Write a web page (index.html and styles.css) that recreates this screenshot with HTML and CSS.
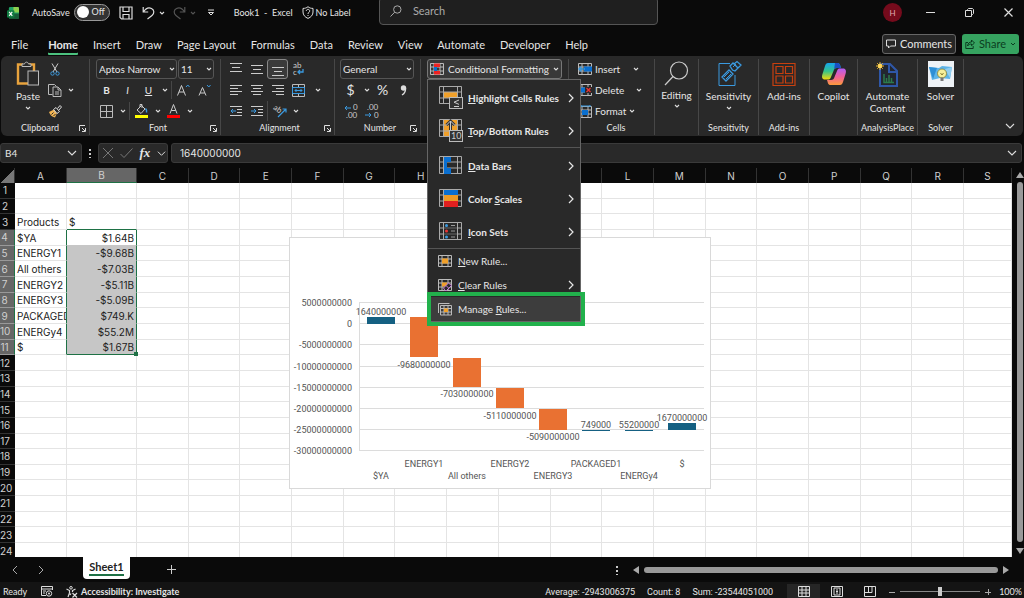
FILE: index.html
```html
<!DOCTYPE html>
<html lang="en">
<head>
  <meta charset="UTF-8">
  <title>Book1 - Excel</title>
  <link rel="stylesheet" href="styles.css">
</head>
<body>

  <!-- Shared icons -->
  <svg class="defs" aria-hidden="true">
    <symbol id="chev" viewBox="0 0 6 6"><path d="M1 2l2 2 2-2" fill="none" stroke="#ddd" stroke-width="1.1"/></symbol>
    <symbol id="chev-big" viewBox="0 0 10 10"><path d="M1 3l4 4 4-4" fill="none" stroke="#ddd" stroke-width="1.1"/></symbol>
    <symbol id="arrow-right" viewBox="0 0 6 10"><path d="M1 1l4 4-4 4" fill="none" stroke="#e6e6e6" stroke-width="1.2"/></symbol>
    <symbol id="launch" viewBox="0 0 7 7"><path d="M.5 6V.5H6M3 3l3 3M6.500 3v3.500H3" fill="none" stroke="#ddd"/></symbol>
    <symbol id="grid-sm" viewBox="0 0 14 12"><path d="M.5.5h13v11H.5zM4 .5v11M10 .5v11M.5 4h13M.5 8h13" fill="none" stroke="#bbb"/></symbol>
    <symbol id="grid-lg" viewBox="0 0 24 19"><path d="M.5.5h22v17H.5zM4.500.5v17M18.500.5v17M.5 6h22M.5 12h22" fill="none" stroke="#aaa"/></symbol>
  </svg>

  <header class="titlebar">
    <svg class="logo" viewBox="0 0 13 13"><rect x="2" width="11" height="13" rx="1.500" fill="#21a366"/><path d="M7 0h4.500A1.500 1.500 0 0 1 13 1.500V6H7z" fill="#8fd04e"/><path d="M2 7h11v4.500a1.500 1.500 0 0 1-1.500 1.500h-8A1.500 1.500 0 0 1 2 11.500z" fill="#185c37"/><rect y="3.500" width="8" height="8" rx="1" fill="#107c41"/><path d="M2.300 5.300l3.400 4.400M5.700 5.300L2.300 9.700" stroke="#fff" stroke-width="1.200"/></svg>
    <label class="autosave">AutoSave
      <span class="toggle"><input type="checkbox"><span class="toggle-text">Off</span></span>
    </label>
    <button class="tb-btn save" aria-label="Save"><svg width="14" height="14" viewBox="0 0 14 14"><path d="M1 1h12v12H2.500L1 11.500zM4 1v4.500h6V1M4 13V8.500h6V13" fill="none" stroke="#ddd" stroke-width="1.200"/></svg></button>
    <button class="tb-btn undo" aria-label="Undo"><svg width="13" height="14" viewBox="0 0 13 14"><path d="M1.200 1v5h5M1.500 5.800C4 2 7 1.200 9.500 2.500c3 1.500 3 5 .5 7L5.500 13" fill="none" stroke="#ddd" stroke-width="1.200"/></svg><svg class="chev"><use href="#chev"/></svg></button>
    <button class="tb-btn redo" aria-label="Redo"><svg width="13" height="14" viewBox="0 0 13 14"><path d="M11.800 1v5h-5M11.500 5.800C9 2 6 1.200 3.500 2.500c-3 1.500-3 5-.5 7L7.500 13" fill="none" stroke="#ddd" stroke-width="1.200"/></svg><svg class="chev"><use href="#chev"/></svg></button>
    <button class="tb-btn more" aria-label="Customize toolbar"><svg width="6" height="7" viewBox="0 0 6 7"><path d="M0 1h6M.5 3.500L3 6l2.500-2.500z" fill="none" stroke="#ddd"/></svg></button>
    <span class="doc-name">Book1&nbsp; -&nbsp; Excel</span>
    <button class="tb-btn label-btn"><svg width="12" height="13" viewBox="0 0 12 13"><path d="M6 .7C4.500 2 3 2.400 1 2.400V6c0 3 2 5.200 5 6.400 3-1.200 5-3.400 5-6.400V2.400C9 2.400 7.500 2 6 .7zM4.300 5c0-2.200 3.400-2.200 3.400 0C7.700 6.300 6 6.300 6 8M6 9v1" fill="none" stroke="#ddd"/></svg>No Label</button>
    <label class="search">
      <svg width="12" height="12" viewBox="0 0 12 12"><circle cx="7.300" cy="4.500" r="3.700" fill="none" stroke="#aaa"/><path d="M4.700 7.200L.5 11.500" stroke="#aaa"/></svg>
      <input type="text" placeholder="Search" aria-label="Search">
    </label>
    <div class="window-btns">
      <button class="avatar">H</button>
      <button aria-label="Minimize"><svg width="9" height="9"><path d="M0 4.500h9" stroke="#ddd"/></svg></button>
      <button aria-label="Restore"><svg width="9" height="9" viewBox="0 0 9 9"><path d="M.5 2.500h6v6h-6zM2.500 2.500v-1l1-1h4l1 1v4l-1 1h-1" fill="none" stroke="#ddd"/></svg></button>
      <button aria-label="Close"><svg width="9" height="9"><path d="M.5.5l8 8M8.500.5l-8 8" stroke="#ddd" stroke-width="1.200"/></svg></button>
    </div>
  </header>

  <nav class="tabs">
    <a href="#" class="file">File</a>
    <a href="#" class="active">Home</a>
    <a href="#">Insert</a>
    <a href="#">Draw</a>
    <a href="#">Page Layout</a>
    <a href="#">Formulas</a>
    <a href="#">Data</a>
    <a href="#">Review</a>
    <a href="#">View</a>
    <a href="#">Automate</a>
    <a href="#">Developer</a>
    <a href="#">Help</a>
    <div class="tab-actions">
      <button class="comments"><svg width="10" height="10" viewBox="0 0 10 10"><path d="M.5 1h9v6H4.500L2.500 9V7h-2z" fill="none" stroke="#ddd"/></svg>Comments</button>
      <button class="share"><svg width="10" height="10" viewBox="0 0 10 10"><path d="M3 3.500H.8v6h7.400V7M2.500 7c.5-3 2-4 4-4V1l3 3-3 2.700V5C5 5 3.500 5.500 2.500 7z" fill="none" stroke="#0b3d20"/></svg>Share<svg class="chev dark" viewBox="0 0 6 6"><path d="M1 2l2 2 2-2" fill="none" stroke="#0b3d20"/></svg></button>
    </div>
  </nav>

  <section class="ribbon">
    <div class="group clipboard">
      <div class="group-body">
        <button class="big paste"><svg width="24" height="26" viewBox="0 0 24 26"><path d="M7 3.500H2v19h10" fill="none" stroke="#e8a33d" stroke-width="2.400"/><path d="M13 3.500h5V10" fill="none" stroke="#e8a33d" stroke-width="2.400"/><path d="M6 5.500V3h2.500C9 .5 12 .5 12.500 3H15v2.500z" fill="#292929" stroke="#bbb"/><rect x="12" y="10" width="10.500" height="14" fill="#292929" stroke="#bbb"/></svg>Paste<svg class="chev"><use href="#chev"/></svg></button>
        <div class="rows">
          <div class="row"><button aria-label="Cut"><svg width="10" height="13" viewBox="0 0 10 13"><path d="M2 .5L7 9M8 .5L3 9" stroke="#ccc" fill="none"/><circle cx="2.500" cy="10.500" r="1.700" fill="none" stroke="#3a9ae0"/><circle cx="7.500" cy="10.500" r="1.700" fill="none" stroke="#3a9ae0"/></svg></button></div>
          <div class="row"><button aria-label="Copy"><svg width="14" height="13" viewBox="0 0 14 13"><path d="M4.500 10.500h-4V.5h6l2 2M5 3h5l3 3v6.500H5zM10 3v3h3M7 8h4M7 10h4" fill="none" stroke="#bbb"/></svg></button><button class="drop" aria-label="Copy options"><svg class="chev"><use href="#chev"/></svg></button></div>
          <div class="row"><button aria-label="Format Painter"><svg width="14" height="13" viewBox="0 0 14 13"><path d="M1 7l5-2.500L9 8l-2 4.500C4 12 2 10 1 7z" fill="#f2b554"/><path d="M5.500 4.500L8 2.500l3.500 4L9 8.500zM9.500 3.500l2.500-3 1.500 1.500-2.500 3" fill="#292929" stroke="#ddd"/><path d="M3.500 9.500l2-2M5.500 11l2-2" stroke="#292929"/></svg></button></div>
        </div>
      </div>
      <div class="caption">Clipboard<button class="launcher" aria-label="Clipboard settings"><svg width="7" height="7"><use href="#launch"/></svg></button></div>
    </div>

    <div class="group font">
      <div class="group-body rows">
        <div class="row fields">
          <span class="field name"><select aria-label="Font"><option>Aptos Narrow</option></select><svg class="chev"><use href="#chev"/></svg></span>
          <span class="field size"><select aria-label="Font size"><option>11</option></select><svg class="chev"><use href="#chev"/></svg></span>
        </div>
        <div class="row">
          <button><b>B</b></button><button><i>I</i></button><button><u>U</u></button><button class="drop" aria-label="Underline options"><svg class="chev"><use href="#chev"/></svg></button><span class="bar"></span>
          <button aria-label="Increase font size"><svg width="13" height="12" viewBox="0 0 13 12"><path d="M.5 11.500L4.500 1.500l4 10M2 8h5" fill="none" stroke="#ccc"/><path d="M9 3l1.800-2 1.700 2" fill="none" stroke="#3a9ae0"/></svg></button><button aria-label="Decrease font size"><svg width="13" height="12" viewBox="0 0 13 12"><path d="M1 11.500L4.500 3.500l3.500 8M2.200 9h4.600" fill="none" stroke="#ccc"/><path d="M9 1l1.800 2 1.700-2" fill="none" stroke="#3a9ae0"/></svg></button>
        </div>
        <div class="row">
          <button aria-label="Borders"><svg width="13" height="13" viewBox="0 0 13 13"><path d="M.5.5h12v12H.5zM6.500.5v12M.5 6.500h12" fill="none" stroke="#bbb"/></svg></button><button class="drop" aria-label="Border options"><svg class="chev"><use href="#chev"/></svg></button><span class="bar"></span>
          <button aria-label="Fill color"><svg width="13" height="14" viewBox="0 0 13 14"><path d="M2 6l4.500-4.500L10 5 6 9.500zM5 3V.5h2V4" fill="none" stroke="#ccc"/><path d="M10.500 4.500c1.500 1.500 1.500 2.500 1 4" fill="none" stroke="#3a9ae0" stroke-width="1.500"/><path d="M0 11h13v3H0z" fill="#ff0"/></svg></button><button class="drop" aria-label="Fill options"><svg class="chev"><use href="#chev"/></svg></button>
          <button aria-label="Font color"><svg width="13" height="14" viewBox="0 0 13 14"><path d="M3 9.500L6.500.5l3.500 9M4.300 6.500h4.400" fill="none" stroke="#ccc"/><path d="M0 11h13v3H0z" fill="#f00"/></svg></button><button class="drop" aria-label="Font color options"><svg class="chev"><use href="#chev"/></svg></button>
        </div>
      </div>
      <div class="caption">Font<button class="launcher" aria-label="Font settings"><svg width="7" height="7"><use href="#launch"/></svg></button></div>
    </div>

    <div class="group align">
      <div class="group-body rows">
        <div class="row">
          <button aria-label="Top align"><svg width="12" height="12"><path d="M0 .5h12M2 4.500h8M0 8.500h12" stroke="#ccc"/></svg></button><button aria-label="Middle align"><svg width="12" height="12"><path d="M0 2.500h12M2 6.500h8M0 10.500h12" stroke="#ccc"/></svg></button><button class="pressed" aria-label="Bottom align"><svg width="12" height="12"><path d="M0 4.500h12M2 8.500h8M0 12.500h12" stroke="#ccc"/></svg></button><button aria-label="Wrap text"><svg width="13" height="14" viewBox="0 0 13 14"><text x="1" y="6" font-size="8" fill="#ccc">ab</text><text x="1" y="13" font-size="8" fill="#ccc">c</text><path d="M11 7v3H6M8 8l-2 2 2 2" fill="none" stroke="#3a9ae0" stroke-width="1.300"/></svg></button>
        </div>
        <div class="row">
          <button aria-label="Align left"><svg width="12" height="12"><path d="M0 1.500h12M0 4.500h8M0 7.500h12M0 10.500h8" stroke="#ccc"/></svg></button><button aria-label="Center"><svg width="12" height="12"><path d="M0 1.500h12M2 4.500h8M0 7.500h12M2 10.500h8" stroke="#ccc"/></svg></button><button aria-label="Align right"><svg width="12" height="12"><path d="M0 1.500h12M4 4.500h8M0 7.500h12M4 10.500h8" stroke="#ccc"/></svg></button><button aria-label="Merge"><svg width="13" height="13" viewBox="0 0 13 13"><path d="M.5.5h12v12H.5zM6.500.5v3M6.500 9.500v3" fill="none" stroke="#bbb"/><path d="M.5 3.500h12v6H.5zM3 6.500h7M4.500 5L3 6.500 4.500 8M8.500 5L10 6.500 8.500 8" fill="none" stroke="#3a9ae0"/></svg></button><button class="drop wide-drop" aria-label="Merge options"><svg class="chev"><use href="#chev"/></svg></button>
        </div>
        <div class="row">
          <button aria-label="Decrease indent"><svg width="12" height="12"><path d="M0 1.500h12M7 4.500h5M7 7.500h5M0 10.500h12" stroke="#ccc"/><path d="M6 6H1M3 4L1 6l2 2" fill="none" stroke="#3a9ae0"/></svg></button><button aria-label="Increase indent"><svg width="12" height="12"><path d="M0 1.500h12M7 4.500h5M7 7.500h5M0 10.500h12" stroke="#ccc"/><path d="M0 6h5M3 4l2 2-2 2" fill="none" stroke="#3a9ae0"/></svg></button><button class="orient" aria-label="Orientation"><svg width="13" height="13" viewBox="0 0 13 13"><text x="-1" y="7" font-size="8" fill="#ccc" transform="rotate(35 4 5)">ab</text><path d="M4 12l8-8M8.500 4H12v3.500" fill="none" stroke="#3a9ae0" stroke-width="1.200"/></svg></button><button class="drop" aria-label="Orientation options"><svg class="chev"><use href="#chev"/></svg></button>
        </div>
      </div>
      <div class="caption">Alignment<button class="launcher" aria-label="Alignment settings"><svg width="7" height="7"><use href="#launch"/></svg></button></div>
    </div>

    <div class="group number">
      <div class="group-body rows">
        <div class="row fields"><span class="field format"><select aria-label="Number format"><option>General</option></select><svg class="chev"><use href="#chev"/></svg></span></div>
        <div class="row symbols"><button>$</button><button class="drop" aria-label="Currency options"><svg class="chev"><use href="#chev"/></svg></button><button>%</button><button aria-label="Comma style"><svg width="7" height="11" viewBox="0 0 7 11"><circle cx="3.500" cy="3" r="2.700" fill="#ddd"/><path d="M5.500 3c.3 3-1 5.500-3.500 7" fill="none" stroke="#ddd" stroke-width="1.400"/></svg></button></div>
        <div class="row">
          <button aria-label="Increase decimal"><svg width="14" height="14" viewBox="0 0 14 14"><text x="9" y="6" font-size="8" fill="#ccc">0</text><text x="2" y="14" font-size="8" fill="#ccc">.00</text><path d="M7 4H1M3 2L1 4l2 2" fill="none" stroke="#3a9ae0"/></svg></button><button aria-label="Decrease decimal"><svg width="14" height="14" viewBox="0 0 14 14"><text x="2" y="6" font-size="8" fill="#ccc">.00</text><text x="9" y="14" font-size="8" fill="#ccc">0</text><path d="M0 11h6M4 9l2 2-2 2" fill="none" stroke="#3a9ae0"/></svg></button>
        </div>
      </div>
      <div class="caption">Number<button class="launcher" aria-label="Number settings"><svg width="7" height="7"><use href="#launch"/></svg></button></div>
    </div>

    <div class="group styles">
      <button class="cond-btn"><svg width="14" height="12" viewBox="0 0 14 12"><use href="#grid-sm" width="14" height="12"/><path d="M4 .5h6v3.500H4zM4 8h6v3.500H4z" fill="#e22"/><path d="M4 4h3v4H4z" fill="#0a6fd0"/></svg>Conditional Formatting<svg class="chev"><use href="#chev"/></svg></button>

      <!-- Conditional formatting menu -->
      <div class="menu">
        <button class="item large"><svg width="25" height="23" viewBox="0 0 25 23"><path d="M5 6h14v6H5z" fill="#f0a02a"/><use href="#grid-lg" width="24" height="19"/><rect x="10.500" y="11.500" width="13" height="11" fill="#333" stroke="#bbb"/><path d="M20 14l-5 2.200 5 2.200M15 20.500h5" fill="none" stroke="#ccc"/></svg><span><u>H</u>ighlight Cells Rules</span><svg class="sub"><use href="#arrow-right"/></svg></button>
        <button class="item large"><svg width="25" height="23" viewBox="0 0 25 23"><path d="M5 0h13v18H5z" fill="#f0a02a"/><use href="#grid-lg" width="24" height="19"/><path d="M11.500 14V2M7.500 6l4-4 4 4" fill="none" stroke="#333" stroke-width="3"/><path d="M11.500 14V2M7.500 6l4-4 4 4" fill="none" stroke="#ccc"/><rect x="10.500" y="11.500" width="13" height="11" fill="#333" stroke="#bbb"/><text x="12" y="20" font-size="9" font-weight="400" fill="#ccc">10</text></svg><span><u>T</u>op/Bottom Rules</span><svg class="sub"><use href="#arrow-right"/></svg></button>
        <hr class="inset">
        <button class="item large"><svg width="25" height="19" viewBox="0 0 25 19"><use href="#grid-lg" width="24" height="19"/><path d="M5 1h7v5H5zM5 6h3v6H5zM5 12h7v6H5z" fill="#0a6fd0"/></svg><span><u>D</u>ata Bars</span><svg class="sub"><use href="#arrow-right"/></svg></button>
        <button class="item large"><svg width="25" height="19" viewBox="0 0 25 19"><use href="#grid-lg" width="24" height="19"/><path d="M5 1h14v5H5z" fill="#0a6fd0"/><path d="M5 6h14v6H5z" fill="#ec9a25"/><path d="M5 12h14v6H5z" fill="#e02020"/></svg><span>Color <u>S</u>cales</span><svg class="sub"><use href="#arrow-right"/></svg></button>
        <button class="item large"><svg width="25" height="19" viewBox="0 0 25 19"><path d="M.5.5h22v17H.5zM4.500.5v17M18.500.5v17M.5 6h4M.5 12h4M18.500 6h4M18.500 12h4" fill="none" stroke="#aaa"/><path d="M5 6h13M5 12h13" stroke="#666"/><path d="M12 3.500h4M12 9h4M12 15h4" stroke="#999"/><circle cx="7.500" cy="3.500" r="1.500" fill="#3a9ae0"/><circle cx="7.500" cy="9" r="1.500" fill="#e33"/><circle cx="7.500" cy="15" r="1.500" fill="#3a9ae0"/></svg><span><u>I</u>con Sets</span><svg class="sub"><use href="#arrow-right"/></svg></button>
        <hr>
        <button class="item"><svg width="14" height="12" viewBox="0 0 14 12"><use href="#grid-sm" width="14" height="12"/><path d="M4 3.500h6v5H4z" fill="#f0a02a"/></svg><span><u>N</u>ew Rule...</span></button>
        <button class="item"><svg width="14" height="12" viewBox="0 0 14 12"><use href="#grid-sm" width="14" height="12"/><path d="M4 3.500h5v4H4z" fill="#f0a02a"/><path d="M5.500 9l5-5 3 2.500-5 5H7z" fill="#292929" stroke="#c77fd8"/><path d="M8 6.500l3 3" stroke="#c77fd8"/></svg><span><u>C</u>lear Rules</span><svg class="sub"><use href="#arrow-right"/></svg></button>
        <button class="item marked"><svg width="14" height="13" viewBox="0 0 14 13"><path d="M.5 10V.5h11" fill="none" stroke="#bbb"/><path d="M2.500 2.500h11v9.500h-11zM6 2.500V12M10 2.500V12M2.500 5.500h11M2.500 9h11" fill="none" stroke="#bbb"/><path d="M6 5.500h4V9H6z" fill="#f0a02a"/></svg><span>Manage <u>R</u>ules...</span></button>
      </div>
    </div>

    <div class="group cells">
      <div class="group-body rows">
        <div class="row"><button class="cell-btn"><svg width="14" height="12" viewBox="0 0 14 12"><use href="#grid-sm" width="14" height="12"/><path d="M6 3.500h8v5H6z" fill="#0a6fd0"/><path d="M7 6H1M3.500 3.500L1 6l2.500 2.500" fill="none" stroke="#3a9ae0" stroke-width="1.300"/></svg>Insert</button><button class="drop" aria-label="Insert options"><svg class="chev"><use href="#chev"/></svg></button></div>
        <div class="row"><button class="cell-btn wide"><svg width="14" height="12" viewBox="0 0 14 12"><use href="#grid-sm" width="14" height="12"/><path d="M0 3.500h7v5H0z" fill="#0a6fd0"/><path d="M7 3h7v6H7z" fill="#292929"/><path d="M8.500 4l4 4M12.500 4l-4 4" stroke="#e33" stroke-width="1.300"/></svg>Delete</button><button class="drop" aria-label="Delete options"><svg class="chev"><use href="#chev"/></svg></button></div>
        <div class="row"><button class="cell-btn"><svg width="14" height="13" viewBox="0 0 14 13"><use href="#grid-sm" y="1" width="14" height="12"/><path d="M4 5h6v5H4z" fill="#0a6fd0"/><path d="M3 1h9M3 0v2M12 0v2" stroke="#3a9ae0"/></svg>Format<svg class="chev"><use href="#chev"/></svg></button></div>
      </div>
      <div class="caption">Cells</div>
    </div>

    <div class="group editing">
      <button class="big"><svg width="26" height="26" viewBox="0 0 26 26"><circle cx="15" cy="9.500" r="8.500" fill="none" stroke="#ccc" stroke-width="1.200"/><path d="M9 15.500L1 24" stroke="#ccc" stroke-width="1.200"/></svg>Editing<svg class="chev"><use href="#chev"/></svg></button>
    </div>

    <div class="group sensitivity">
      <button class="big"><svg width="26" height="26" viewBox="0 0 26 26"><path d="M14 2.500H3v22h16V14" fill="none" stroke="#3a9ae0"/><path d="M6 16l7-7 4 4-7 7zM14 5l3-3 5 5-3 3-2.500-1zM18 3l3-2.500L25 4l-3 3" fill="none" stroke="#3a9ae0" stroke-width="1.300"/><path d="M8 16l5-5M10 18l5-5M17 6l3-3" stroke="#3a9ae0"/></svg>Sensitivity<svg class="chev"><use href="#chev"/></svg></button>
      <div class="caption">Sensitivity</div>
    </div>

    <div class="group addins">
      <button class="big"><svg width="26" height="26" viewBox="0 0 26 26"><path d="M2 2.500h22v22H2zM5 5.500h7v7H5zM14.500 5.500h7v7h-7zM5 15h7v7H5zM14.500 15h7v7h-7z" fill="none" stroke="#c8400f" stroke-width="1.200"/></svg>Add-ins</button>
      <div class="caption">Add-ins</div>
    </div>

    <div class="group copilot">
      <button class="big"><svg width="26" height="26" viewBox="0 0 26 26">
        <defs>
          <linearGradient id="cp1" x1="0" y1="0" x2="0" y2="1"><stop offset="0" stop-color="#15a5f0"/><stop offset=".5" stop-color="#35c48a"/><stop offset="1" stop-color="#f5d90a"/></linearGradient>
          <linearGradient id="cp2" x1="0" y1="0" x2="0" y2="1"><stop offset="0" stop-color="#b35cf5"/><stop offset=".5" stop-color="#f0609a"/><stop offset="1" stop-color="#fb9a3a"/></linearGradient>
        </defs>
        <path d="M7 2h9c3 0 3 2 4 5h-4c-2 0-3 1-3.500 3L10 16c-.7 2-1.500 2.500-3 2.500H4C1 18.500.5 16 1.500 13L4 5c.6-2 1.500-3 3-3z" fill="url(#cp1)"/>
        <path d="M14 2h2c3 0 3 2 4 5h-4c-2 0-2.500.5-3 2z" fill="#1b4fc4"/>
        <path d="M19 24h-9c-3 0-3-2-4-5h4c2 0 3-1 3.500-3L16 10c.7-2 1.500-2.500 3-2.500h3c3 0 3.500 2.500 2.500 5.500L22 21c-.6 2-1.500 3-3 3z" fill="url(#cp2)"/>
      </svg>Copilot</button>
    </div>

    <div class="group analysis">
      <button class="big"><svg width="26" height="26" viewBox="0 0 26 26"><path d="M5 3h10l7 7v15H5z" fill="#22262f" stroke="#2f57a8" stroke-width="2"/><path d="M14 3v8h8" fill="none" stroke="#2f57a8" stroke-width="2"/><path d="M9 13v8.500h10M11.500 21v-4M14 21v-7M16.500 21v-4" fill="none" stroke="#2c7a4b" stroke-width="1.500"/><path d="M5 1v8M1 5h8M2.200 2.200l5.600 5.600M7.800 2.200L2.200 7.800" stroke="#e9b42a"/><circle cx="5" cy="5" r="2.200" fill="#ffd65a"/></svg>Automate<br>Content</button>
      <div class="caption">AnalysisPlace</div>
    </div>

    <div class="group solver">
      <button class="big"><svg width="26" height="26" viewBox="0 0 26 26"><path d="M0 0h26v26H0z" fill="#eef2f6"/><path d="M1 6l10 1 3-2 10 1-2 12-10-1-8 2z" fill="#5db4e8"/><path d="M1 6l8 1-4 11z" fill="#2e8fd6"/><path d="M17 8l7-2-2 11z" fill="#93cff0"/><circle cx="14" cy="12.500" r="4.500" fill="#f7ef9a" stroke="#8a8030" stroke-width=".8"/><path d="M12.500 16.500h3V20h-3z" fill="#777"/><path d="M12.500 12l1.500 2 1.500-2" fill="none" stroke="#8a8030"/></svg>Solver</button>
      <div class="caption">Solver</div>
    </div>

    <button class="collapse" aria-label="Collapse ribbon"><svg width="10" height="10"><use href="#chev-big"/></svg></button>
  </section>

  <section class="formula-bar">
    <div class="box name-box"><input type="text" value="B4" aria-label="Name box"><svg width="10" height="10"><use href="#chev-big"/></svg></div>
    <span class="dots"></span>
    <div class="box fx">
      <button aria-label="Cancel"><svg width="10" height="10"><path d="M0 0l10 10M10 0L0 10" stroke="#777"/></svg></button>
      <button aria-label="Enter"><svg width="13" height="10"><path d="M.5 6l3.500 3.500L12.500.5" fill="none" stroke="#777"/></svg></button>
      <button aria-label="Insert function"><i>fx</i></button>
      <svg width="9" height="9"><use href="#chev-big"/></svg>
    </div>
    <div class="box formula"><input type="text" value="1640000000" aria-label="Formula bar"><svg width="10" height="10"><use href="#chev-big"/></svg></div>
  </section>

  <main class="sheet">
    <div class="canvas">
      <table id="grid">
        <thead></thead>
        <tbody></tbody>
      </table>
      <svg class="chart" id="chart" viewBox="0 0 420 250" width="420" height="250"></svg>
    </div>
    <div class="vscroll">
      <svg width="8" height="6"><path d="M4 0l4 6H0z" fill="#aaa"/></svg>
      <span></span>
      <svg width="8" height="6"><path d="M4 6l4-6H0z" fill="#aaa"/></svg>
    </div>
  </main>

  <div class="sheet-tabs">
    <button class="nav" aria-label="Previous sheet"><svg width="6" height="10"><path d="M5 1L1 5l4 4" fill="none" stroke="#aaa"/></svg></button>
    <button class="nav" aria-label="Next sheet"><svg width="6" height="10"><path d="M1 1l4 4-4 4" fill="none" stroke="#aaa"/></svg></button>
    <button class="tab-name"><span>Sheet1</span></button>
    <button class="add" aria-label="New sheet"><svg width="9" height="9"><path d="M4.500 0v9M0 4.500h9" stroke="#ccc"/></svg></button>
    <span class="dots"></span>
    <div class="hscroll">
      <svg width="6" height="8"><path d="M6 0L0 4l6 4z" fill="#aaa"/></svg>
      <span></span>
      <svg width="6" height="8"><path d="M0 0l6 4-6 4z" fill="#aaa"/></svg>
    </div>
  </div>

  <footer class="status">
    <span class="ready">Ready</span>
    <svg width="12" height="11" viewBox="0 0 12 11"><path d="M5 9.500H.5V.5h11V4M.5 3h11M2 5h3M2 7h2" fill="none" stroke="#ddd"/><circle cx="8" cy="7.500" r="2.700" fill="none" stroke="#ddd"/><circle cx="8" cy="7.500" r="1" fill="#ddd"/></svg>
    <a href="#" class="access"><svg width="12" height="12" viewBox="0 0 12 12"><circle cx="5" cy="1.800" r="1.300" fill="none" stroke="#ddd"/><path d="M.5 3l3 1.500v2.500L2 11M9.500 3l-3 1.500V6M5 7.500L4 9M6.500 7l4.500 4.500M11 7l-4.500 4.500" fill="none" stroke="#ddd" stroke-width="1.200"/></svg>Accessibility: Investigate</a>
    <div class="stats"><span>Average: -2943006375</span><span>Count: 8</span><span>Sum: -23544051000</span></div>
    <div class="views">
      <button class="on" aria-label="Normal view"><svg width="12" height="11"><path d="M.5.5h11v10H.5zM4 .5v10M8 .5v10M.5 4h11M.5 7h11" fill="none" stroke="#ddd"/></svg></button>
      <button aria-label="Page layout view"><svg width="12" height="11"><path d="M.5.5h11v10H.5zM3 2h6v7H3zM5 4h2M5 5.500h2M5 7h2" fill="none" stroke="#ddd"/></svg></button>
      <button aria-label="Page break view"><svg width="12" height="11"><path d="M.5.5h11v10H.5zM4.500.5v6M8 .5v6M.5 6.500H8" fill="none" stroke="#ddd"/></svg></button>
    </div>
    <div class="zoom">
      <button aria-label="Zoom out"><svg width="6" height="6"><path d="M0 3.500h6" stroke="#aaa"/></svg></button>
      <input type="range" min="0" max="100" value="50" aria-label="Zoom">
      <button aria-label="Zoom in"><svg width="6" height="6"><path d="M0 3.500h6M3.500 0v6" stroke="#aaa"/></svg></button>
      <span>100%</span>
    </div>
  </footer>

  <script>
    const cols = 'ABCDEFGHIJKLMNOPQRS'.split('');
    const values = {
      A3: 'Products', B3: '$',
      A4: '$YA', B4: '$1.64B',
      A5: 'ENERGY1', B5: '-$9.68B',
      A6: 'All others', B6: '-$7.03B',
      A7: 'ENERGY2', B7: '-$5.11B',
      A8: 'ENERGY3', B8: '-$5.09B',
      A9: 'PACKAGED1', B9: '$749.K',
      A10: 'ENERGy4', B10: '$55.2M',
      A11: '$', B11: '$1.67B'
    };

    // Sheet grid
    document.querySelector('#grid thead').innerHTML = '<tr><th class="corner"></th>' +
      cols.map(c => '<th class="col-' + c + '">' + c + '</th>').join('') + '</tr>';

    let rows = '';
    for (let r = 1; r <= 24; r++) {
      const sel = r >= 4 && r <= 11;
      rows += '<tr' + (sel ? ' class="sel"' : '') + '><th>' + r + '</th>';
      cols.forEach(c => {
        let cls = sel && c === 'B' ? 'range' : '';
        if (c === 'B' && r === 3) cls = 'above';
        if (c === 'B' && r === 4) cls = 'range current';
        if (c === 'B' && r === 11) cls = 'range last';
        rows += '<td' + (cls ? ' class="' + cls + '"' : '') + '>' + (values[c + r] || '') + '</td>';
      });
      rows += '</tr>';
    }
    document.querySelector('#grid tbody').innerHTML = rows;

    // Waterfall chart: name, value, top and bottom of the bar, baseline of the label
    const data = [
      ['$YA', '1640000000', 79, 86, 77],
      ['ENERGY1', '-9680000000', 79, 119, 130],
      ['All others', '-7030000000', 120, 149, 159],
      ['ENERGY2', '-5110000000', 150, 170, 181],
      ['ENERGY3', '-5090000000', 171, 192, 202],
      ['PACKAGED1', '749000', 192, 193, 190],
      ['ENERGy4', '55200000', 192, 193, 190],
      ['$', '1670000000', 185, 192, 183]
    ];
    let svg = '';
    for (let i = 0; i < 8; i++) {
      const y = Math.round(64 + i * 21.2);
      svg += '<path class="line" d="M69 ' + (y + 0.5) + 'H414"/>';
      svg += '<text class="axis" x="62" y="' + (y + 4) + '">' + (5000000000 - i * 5000000000) + '</text>';
    }
    svg += '<path class="line" d="M69.5 64V213"/>';
    data.forEach((d, i) => {
      const x = 77 + i * 43;
      const cls = d[1][0] === '-' ? 'down' : 'up';
      svg += '<rect class="' + cls + '" x="' + x + '" y="' + d[2] + '" width="28" height="' + (d[3] - d[2]) + '"/>';
      svg += '<text x="' + (x + 14) + '" y="' + d[4] + '">' + d[1] + '</text>';
      svg += '<text x="' + (x + 14) + '" y="' + (i % 2 ? 229 : 241) + '">' + d[0] + '</text>';
    });
    document.getElementById('chart').innerHTML = svg;
  </script>
</body>
</html>
```
FILE: styles.css
```css
* {
  box-sizing: border-box;
}

body {
  margin: 0;
  min-height: 100vh;
  display: flex;
  flex-direction: column;
  background-color: #0a0a0a;
  color: #e6e6e6;
  font-family: Lato, 'Open Sans', sans-serif;
  font-size: 10px;
  line-height: 12px;
}

button, input, select {
  font: inherit;
  color: inherit;
  background: none;
  border: none;
  margin: 0;
  padding: 0;
}

button {
  display: flex;
  align-items: center;
  justify-content: center;
  white-space: nowrap;
}

a {
  color: inherit;
  text-decoration: none;
}

svg {
  flex: none;
  overflow: visible;
}

.defs {
  position: absolute;
  width: 0;
  height: 0;
}

.chev {
  width: 6px;
  height: 6px;
}

/* Title bar */
.titlebar {
  position: relative;
  display: flex;
  align-items: center;
  height: 25px;
  padding-left: 7px;
  font-size: 9px;
}

.logo {
  width: 12px;
  height: 12px;
  margin-right: 13px;
}

.autosave {
  display: flex;
  align-items: center;
  gap: 4px;
}

.toggle {
  position: relative;
  display: flex;
  height: 17px;
  width: 36px;
}

.toggle input {
  appearance: none;
  width: 36px;
  height: 17px;
  border: 1px solid #999;
  border-radius: 9px;
  background-color: #333;
}

.toggle input::before {
  content: '';
  display: block;
  width: 12px;
  height: 12px;
  margin: 2px;
  margin-top: 1px;
  border-radius: 50%;
  background-color: #fff;
}

.toggle-text {
  position: absolute;
  right: 5px;
  top: 2px;
}

.tb-btn {
  gap: 4px;
}

.save {
  margin-left: 9px;
}

.undo {
  margin-left: 9px;
}

.redo {
  margin-left: 8px;
  opacity: 0.35;
}

.more {
  margin-left: 12px;
}

.doc-name {
  margin-left: 20px;
  margin-right: 9px;
}

.label-btn {
  gap: 2px;
}

.search {
  position: absolute;
  left: 37%;
  top: -3px;
  width: 279px;
  height: 28px;
  display: flex;
  align-items: center;
  gap: 11px;
  padding-left: 10px;
  border: 1px solid #555;
  border-radius: 4px;
  background-color: #1f1f1f;
  font-size: 11px;
}

.search input {
  flex: 1;
}

.search input::placeholder {
  color: #aaa;
}

.window-btns {
  display: flex;
  align-items: center;
  gap: 30px;
  margin-left: auto;
  padding-right: 11px;
}

.avatar {
  width: 19px;
  height: 19px;
  margin-right: -6px;
  border-radius: 50%;
  background-color: #750b1c;
  color: #e0a9b0;
  font-size: 8px;
}

/* Tabs */
.tabs {
  display: flex;
  align-items: center;
  gap: 15px;
  height: 31px;
  padding: 7px 5px 0 11px;
  font-size: 11px;
}

.tabs a {
  line-height: 14px;
  padding: 2px 0 1px;
}

.file {
  margin-right: 5px;
}

.tabs .active {
  font-weight: 700;
  box-shadow: 0 2px 0 #4cc27f;
  border-radius: 1px;
}

.tab-actions {
  display: flex;
  gap: 6px;
  margin-left: auto;
}

.tab-actions button {
  height: 20px;
  gap: 4px;
  border-radius: 3px;
}

.comments {
  width: 74px;
  border: 1px solid #666;
  background-color: #262626;
}

.share {
  width: 57px;
  background-color: #36a360;
  color: #0b3d20;
}

/* Ribbon */
.ribbon {
  display: flex;
  height: 80px;
  margin: 0 1px;
  padding: 3px 0 1px;
  border-radius: 6px;
  background-color: #292929;
}

.group {
  position: relative;
  display: flex;
  flex-direction: column;
  flex: none;
  border-right: 1px solid #474747;
}

.group-body {
  display: flex;
}

.rows {
  display: flex;
  flex-direction: column;
  gap: 1px;
}

.row {
  display: flex;
  align-items: center;
  height: 20px;
}

.row button {
  width: 21px;
  height: 20px;
}

.row .drop {
  width: 11px;
}

.row .wide-drop {
  width: 17px;
}

.row .bar {
  width: 1px;
  height: 18px;
  margin: 0 1px;
  background-color: #474747;
}

.row .orient {
  width: 23px;
  padding-left: 2px;
  border-left: 1px solid #474747;
}

.caption {
  margin-top: auto;
  text-align: center;
  font-size: 9px;
  line-height: 14px;
}

.launcher {
  position: absolute;
  right: 3px;
  bottom: 3px;
}

.big {
  flex-direction: column;
  justify-content: flex-start;
  gap: 3px;
  padding-top: 2px;
  white-space: normal;
}

.clipboard {
  width: 89px;
}

.clipboard .group-body {
  padding-left: 14px;
}

.paste {
  width: 26px;
}

.clipboard .rows {
  padding-left: 3px;
}

.clipboard .caption {
  padding-right: 10px;
}

.font {
  width: 131px;
  padding-left: 6px;
}

.fields {
  gap: 1px;
}

.field {
  position: relative;
  height: 20px;
}

.field select {
  appearance: none;
  width: 100%;
  height: 20px;
  padding-left: 2px;
  border: 1px solid #555;
  border-radius: 3px;
}

.field .chev {
  position: absolute;
  right: 2px;
  top: 7px;
}

.name {
  width: 81px;
}

.size {
  width: 36px;
}

.format {
  width: 74px;
}

.align {
  width: 114px;
  padding-left: 4px;
}

.row .pressed {
  border: 1px solid #888;
  border-radius: 3px;
  background-color: #3a3a3a;
}

.number {
  width: 86px;
  padding-left: 5px;
}

.symbols {
  font-size: 14px;
}

.styles {
  width: 148px;
  padding-left: 6px;
}

.cond-btn {
  width: 135px;
  height: 20px;
  gap: 4px;
  border: 1px solid #777;
  border-radius: 3px;
  background-color: #383838;
}

.menu {
  position: absolute;
  z-index: 5;
  top: 20px;
  left: 6px;
  width: 154px;
  padding: 1px 0 0;
  border: 1px solid #666;
  background-color: #292929;
}

.menu hr {
  margin: 0;
  border: none;
  border-top: 1px solid #555;
}

.menu .inset {
  margin-left: 36px;
  margin-bottom: 1px;
}

.item {
  position: relative;
  width: 100%;
  height: 24px;
  justify-content: flex-start;
  gap: 6px;
  padding-left: 10px;
}

.large {
  height: 33px;
  gap: 4px;
  padding-left: 11px;
  font-weight: 700;
}

.item .sub {
  width: 6px;
  height: 10px;
  margin-left: auto;
  margin-right: 6px;
}

.marked {
  background-color: #3d3d3d;
}

.marked::after {
  content: '';
  position: absolute;
  inset: -5px -5px -5px -1px;
  border: 4px solid #22b14c;
}

.cells {
  width: 86px;
  padding-left: 9px;
}

.cells .row .cell-btn {
  width: 52px;
  gap: 3px;
  justify-content: flex-start;
}

.cells .row .wide {
  width: 55px;
}

.editing {
  width: 44px;
}

.editing .big {
  gap: 2px;
}

.sensitivity {
  width: 60px;
}

.addins {
  width: 51px;
}

.copilot {
  width: 48px;
}

.analysis {
  width: 60px;
}

.solver {
  width: 46px;
}

.collapse {
  align-self: flex-end;
  margin-left: auto;
  margin-right: 8px;
  margin-bottom: 4px;
}

/* Formula bar */
.formula-bar {
  display: flex;
  align-items: center;
  padding: 7px 2px 5px 0;
}

.box {
  display: flex;
  align-items: center;
  height: 20px;
  padding: 0 4px;
  border: 1px solid #3a3a3a;
  border-radius: 3px;
  background-color: #292929;
}

.box input {
  flex: 1;
  min-width: 0;
}

.name-box {
  width: 82px;
}

.dots {
  width: 2px;
  height: 10px;
  margin: 0 7px;
  background: radial-gradient(circle, #ccc 1px, transparent 1px) 0 0 / 2px 4px;
}

.fx {
  width: 70px;
  justify-content: space-between;
  padding: 0 1px 0 4px;
}

.fx i {
  font: italic 700 13px 'Liberation Serif', serif;
}

.formula {
  flex: 1;
  margin-left: 3px;
  padding-left: 8px;
  font-family: Inter, sans-serif;
}

/* Sheet */
.sheet {
  flex: 1;
  display: flex;
}

.canvas {
  position: relative;
  flex: 1;
  display: flex;
}

table {
  width: 100%;
  margin-bottom: -2px;
  table-layout: fixed;
  border-collapse: separate;
  border-spacing: 0;
  background-color: #fff;
  color: #222;
  font-family: Inter, sans-serif;
}

th {
  height: 15px;
  padding: 0;
  background-color: #0a0a0a;
  color: #d0d0d0;
  font-weight: 400;
}

thead th {
  border-right: 1px solid #333;
}

.corner {
  width: 15px;
  background: linear-gradient(135deg, #0a0a0a 55%, #777 55%);
}

.col-A {
  width: 52px;
}

.col-B {
  width: 70px;
  background-color: #666;
  border-bottom: 1px solid #1e7145;
}

.col-S {
  width: 48px;
}

tbody th {
  padding-right: 5px;
  border-bottom: 1px solid #333;
}

td {
  padding: 1px 2px 0;
  overflow: hidden;
  white-space: nowrap;
  border-right: 1px solid #e4e4e4;
  border-bottom: 1px solid #e4e4e4;
}

.sel th {
  background-color: #666;
  border-right: 1px solid #1e7145;
  border-bottom-color: #999;
}

.sel td:nth-child(2) {
  border-right-color: #1e7145;
}

.range {
  background-color: #c6c6c6;
  border-right-color: #1e7145;
  border-bottom-color: #c6c6c6;
  text-align: right;
}

.current {
  background-color: #fff;
}

.above, .last {
  border-bottom-color: #1e7145;
}

.last {
  position: relative;
  overflow: visible;
}

.last::after {
  content: '';
  position: absolute;
  right: -2px;
  bottom: -2px;
  width: 4px;
  height: 4px;
  background-color: #1e7145;
}

.chart {
  position: absolute;
  left: 289px;
  top: 69px;
  box-sizing: content-box;
  border: 1px solid #d9d9d9;
  background-color: #fff;
  font-family: Roboto, sans-serif;
  font-size: 9px;
  text-anchor: middle;
  fill: #555;
}

.chart .axis {
  text-anchor: end;
}

.chart .line {
  stroke: #dcdcdc;
}

.up {
  fill: #156082;
}

.down {
  fill: #e97132;
}

.vscroll {
  width: 12px;
  display: flex;
  flex-direction: column;
  align-items: center;
  gap: 4px;
  padding: 4px 0 3px 4px;
}

.vscroll span {
  flex: 1;
  width: 6px;
  margin-bottom: 2px;
  border-radius: 3px;
  background-color: #999;
}

/* Sheet tabs */
.sheet-tabs {
  position: relative;
  display: flex;
  align-items: center;
  height: 25px;
  background-color: #0a0a0a;
}

.nav {
  width: 26px;
  padding-left: 4px;
}

.tab-name {
  align-self: flex-start;
  width: 47px;
  height: 22px;
  margin-left: 31px;
  border-radius: 0 0 4px 4px;
  background-color: #fff;
  color: #222;
  font-size: 11px;
  font-weight: 700;
}

.tab-name span {
  line-height: 14px;
  border-bottom: 2px solid #1e7145;
}

.add {
  margin-left: 37px;
}

.sheet-tabs .dots {
  margin-left: auto;
  margin-right: 12px;
}

.hscroll {
  width: 382px;
  display: flex;
  align-items: center;
  gap: 5px;
  margin-right: 12px;
  padding: 0 3px;
}

.hscroll span {
  flex: 1;
  height: 6px;
  border-radius: 3px;
  background-color: #999;
}

/* Status bar */
.status {
  display: flex;
  align-items: center;
  height: 16px;
  padding: 3px 2px 0 3px;
  background-color: #141414;
  font-size: 9px;
}

.ready {
  width: 38px;
}

.access {
  display: flex;
  align-items: center;
  gap: 3px;
  margin-left: 13px;
  font-weight: 700;
}

.stats {
  display: flex;
  gap: 12px;
  margin-left: auto;
  margin-right: 14px;
  font-family: Roboto, sans-serif;
}

.views {
  display: flex;
}

.views button {
  width: 33px;
  height: 16px;
}

.views .on {
  background-color: #262626;
}

.zoom {
  display: flex;
  align-items: center;
  gap: 5px;
  margin-left: 3px;
}

.zoom span {
  margin-left: 3px;
}

.zoom input {
  appearance: none;
  width: 80px;
  height: 1px;
  background-color: #888;
}

.zoom input::-webkit-slider-thumb {
  appearance: none;
  width: 4px;
  height: 9px;
  background-color: #ccc;
}
```
